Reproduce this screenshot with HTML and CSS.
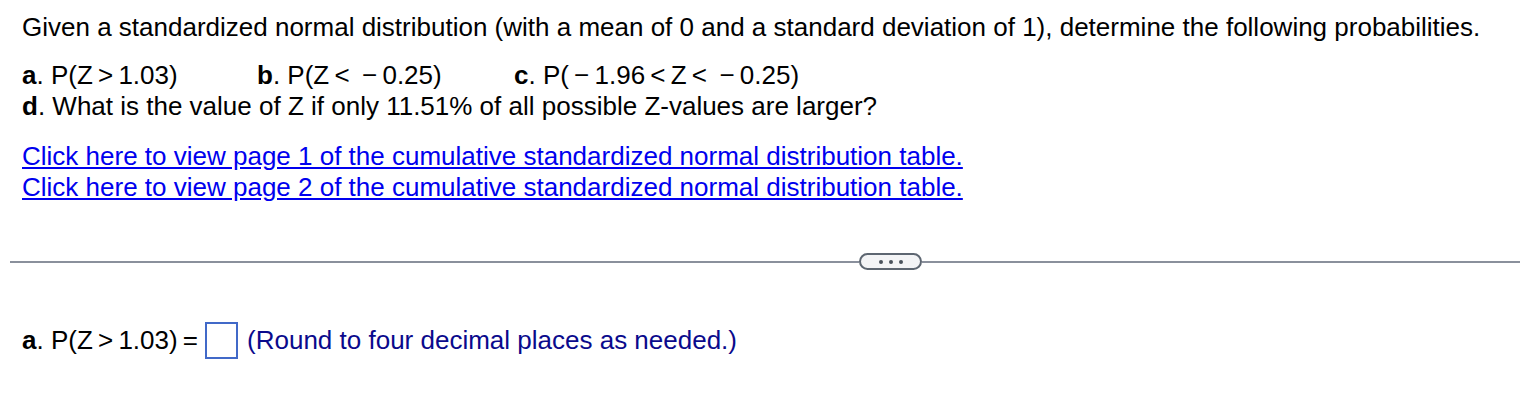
FILE: index.html
```html
<!DOCTYPE html>
<html>
<head>
<meta charset="utf-8">
<link rel="stylesheet" href="styles.css">
</head>
<body>
<div class="page">
  <div class="question">
    <p class="intro">Given a standardized normal distribution (with a mean of 0 and a standard deviation of 1), determine the following probabilities.</p>
    <div class="parts">
      <div class="row">
        <span class="part part-a"><b>a</b>. P(Z&#8201;&gt;&#8201;1.03)</span>
        <span class="part part-b"><b>b</b>. P(Z&#8201;&lt;&#8201; &#8722;&#8201;0.25)</span>
        <span class="part part-c"><b>c</b>. P(&#8201;&#8722;&#8201;1.96&#8201;&lt;&#8201;Z&#8201;&lt;&#8201; &#8722;&#8201;0.25)</span>
      </div>
      <div class="row"><span><b>d</b>. What is the value of Z if only 11.51% of all possible Z-values are larger?</span></div>
    </div>
    <div class="links">
      <a href="#">Click here to view page 1 of the cumulative standardized normal distribution table.</a>
      <a href="#">Click here to view page 2 of the cumulative standardized normal distribution table.</a>
    </div>
  </div>
  <div class="divider">
    <span class="line"></span>
    <span class="more"><i></i><i></i><i></i></span>
    <span class="line"></span>
  </div>
  <div class="answer">
    <span class="label"><b>a</b>. P(Z&#8201;&gt;&#8201;1.03)&#8201;=</span>
    <span class="box"></span>
    <span class="hint">(Round to four decimal places as needed.)</span>
  </div>
</div>
</body>
</html>
```

FILE: styles.css
```css
html, body {
  margin: 0;
  padding: 0;
  background: #ffffff;
}
body {
  font-family: "Liberation Sans", Arial, sans-serif;
  font-size: 26px;
  color: #000000;
}
.page {
  width: 1520px;
  height: 402px;
  overflow: hidden;
}
.question {
  padding: 12px 0 0 22px;
}
.intro {
  margin: 0;
  line-height: 31px;
}
.parts {
  margin-top: 17px;
}
.row {
  display: flex;
  line-height: 31px;
  white-space: nowrap;
}
.part-a {
  width: 235px;
}
.part-b {
  width: 257px;
}
.links {
  margin-top: 19px;
  display: flex;
  flex-direction: column;
  align-items: flex-start;
}
.links a {
  color: #0000ee;
  text-decoration: underline;
  line-height: 31px;
}
.divider {
  margin-top: 50px;
  margin-left: 10px;
  display: flex;
  align-items: center;
}
.divider .line {
  height: 2px;
  background: #8a909c;
}
.divider .line:first-child {
  width: 849px;
}
.divider .line:last-child {
  flex: 1;
}
.more {
  width: 59px;
  height: 13px;
  border: 2px solid #5d6671;
  border-radius: 9px;
  background: #f3f4f6;
  display: flex;
  align-items: center;
  justify-content: center;
  gap: 6px;
}
.more i {
  width: 4px;
  height: 4px;
  border-radius: 50%;
  background: #4a525c;
}
.answer {
  margin-top: 52px;
  padding-left: 22px;
  display: flex;
  align-items: center;
  white-space: nowrap;
}
.box {
  width: 29px;
  height: 33px;
  border: 2px solid #4169c8;
  margin-left: 7px;
  margin-right: 9px;
}
.hint {
  color: #0a0a8c;
}
```
